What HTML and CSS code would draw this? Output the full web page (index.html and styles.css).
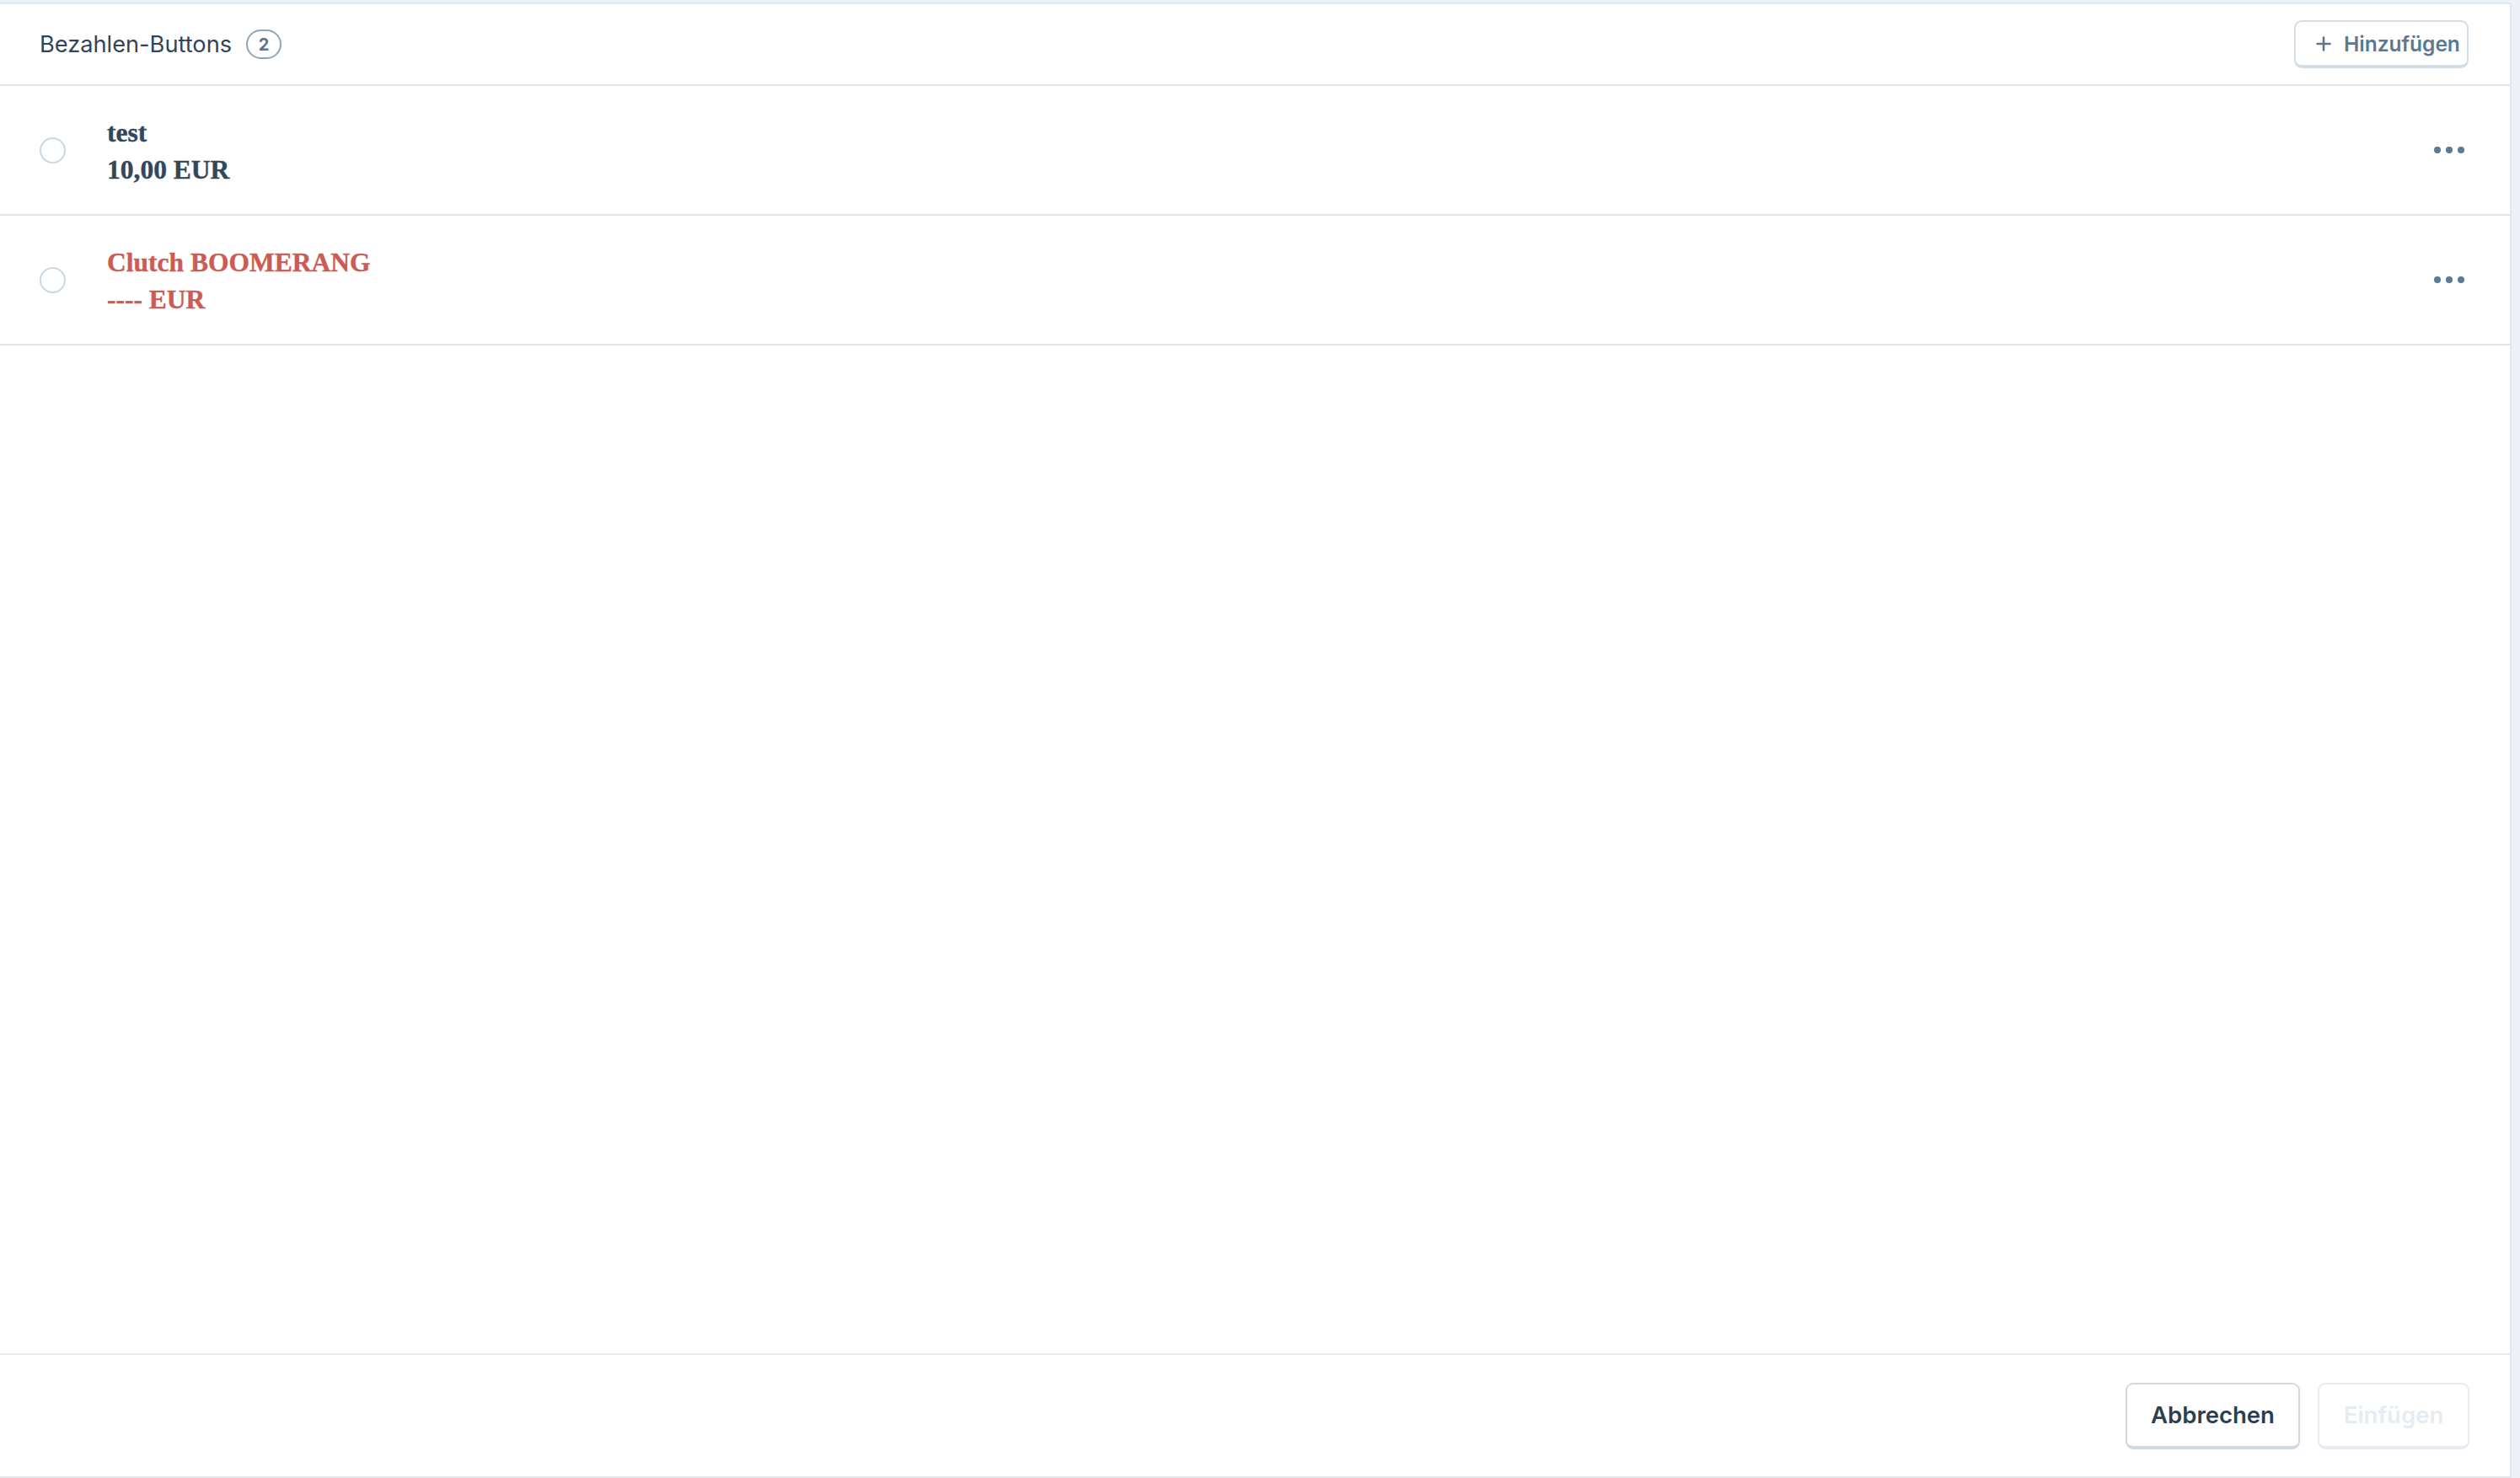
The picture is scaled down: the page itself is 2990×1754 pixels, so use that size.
FILE: index.html
```html
<!DOCTYPE html>
<html lang="de">
<head>
<meta charset="utf-8">
<title>Bezahlen-Buttons</title>
<link rel="stylesheet" href="styles.css">
</head>
<body>
<div class="panel">
  <header class="head">
    <div class="head-title">
      <span class="title">Bezahlen-Buttons</span>
      <span class="badge">2</span>
    </div>
    <button class="btn-add" type="button">
      <svg class="plus" width="18" height="18" viewBox="0 0 18 18"><path d="M9 1.5v15M1.5 9h15" stroke="currentColor" stroke-width="2.6" stroke-linecap="round" fill="none"/></svg>
      <span>Hinzufügen</span>
    </button>
  </header>
  <div class="list">
    <div class="row">
      <span class="radio"></span>
      <div class="info">
        <div class="name">test</div>
        <div class="price">10,00 EUR</div>
      </div>
      <span class="dots"><i></i><i></i><i></i></span>
    </div>
    <div class="row row-error">
      <span class="radio"></span>
      <div class="info">
        <div class="name">Clutch BOOMERANG</div>
        <div class="price">---- EUR</div>
      </div>
      <span class="dots"><i></i><i></i><i></i></span>
    </div>
  </div>
  <div class="spacer"></div>
  <footer class="foot">
    <button class="btn btn-cancel" type="button">Abbrechen</button>
    <button class="btn btn-insert" type="button" disabled>Einfügen</button>
  </footer>
</div>
</body>
</html>
```
FILE: styles.css
```css
html, body {
  margin: 0;
  padding: 0;
  height: 100%;
}
body {
  background: #edf1f5;
  font-family: Inter, "Noto Sans", "Liberation Sans", sans-serif;
  color: #33475b;
}
.panel {
  box-sizing: border-box;
  width: 2980px;
  height: 1751px;
  margin-top: 3px;
  background: #fff;
  border-top: 2px solid #dfe6ed;
  border-right: 2px solid #dfe6ed;
  border-bottom: 2px solid #dfe6ed;
  display: flex;
  flex-direction: column;
}
.head {
  height: 95px;
  border-bottom: 2px solid #dfe6ed;
  display: flex;
  align-items: center;
  justify-content: space-between;
  padding: 0 49px 0 47px;
  flex-shrink: 0;
}
.head-title {
  display: flex;
  align-items: center;
  gap: 17px;
}
.title {
  font-size: 27.2px;
  color: #30445a;
}
.badge {
  box-sizing: border-box;
  width: 42px;
  height: 35px;
  border: 2px solid #8ea4b8;
  border-radius: 18px;
  display: flex;
  align-items: center;
  justify-content: center;
  font-size: 20px;
  font-weight: 700;
  color: #5a7590;
}
.btn-add {
  box-sizing: border-box;
  height: 57px;
  width: 207px;
  display: flex;
  align-items: center;
  gap: 15px;
  padding: 0 10px 0 24px;
  background: #fff;
  border: 2px solid #d3dde6;
  border-bottom-width: 4px;
  border-radius: 9px;
  font-family: Inter, "Noto Sans", sans-serif;
  font-size: 24.5px;
  font-weight: 600;
  color: #5b7891;
  white-space: nowrap;
}
.plus {
  flex-shrink: 0;
}
.list {
  display: flex;
  flex-direction: column;
  flex-shrink: 0;
}
.row {
  height: 152px;
  border-bottom: 2px solid #dce4ec;
  display: flex;
  align-items: center;
  padding: 0 54px 0 47px;
}
.radio {
  box-sizing: border-box;
  width: 31px;
  height: 31px;
  border: 2px solid #cbd7e2;
  border-radius: 50%;
  flex-shrink: 0;
}
.info {
  flex: 1;
  margin-left: 49px;
  padding-top: 3px;
  font-family: "Liberation Serif", "Times New Roman", serif;
  font-weight: 700;
  font-size: 31.5px;
  line-height: 44px;
  color: #33475b;
  -webkit-text-stroke: 0.4px currentColor;
}
.row-error .info {
  color: #cc5b53;
}
.dots {
  display: flex;
  gap: 6px;
}
.dots i {
  width: 8px;
  height: 8px;
  border-radius: 50%;
  background: #5b7a94;
}
.spacer {
  flex: 1;
}
.foot {
  height: 144px;
  flex-shrink: 0;
  border-top: 2px solid #e6ebf0;
  display: flex;
  align-items: center;
  justify-content: flex-end;
  gap: 21px;
  padding: 0 48px 0 0;
}
.btn {
  box-sizing: border-box;
  height: 79px;
  border-radius: 9px;
  background: #fff;
  font-family: Inter, "Noto Sans", sans-serif;
  font-size: 27.5px;
  font-weight: 600;
  padding: 0;
}
.btn-cancel {
  width: 207px;
  border: 2px solid #cfd9e3;
  border-bottom-width: 4px;
  color: #2c3e50;
}
.btn-insert {
  width: 180px;
  border: 2px solid #e6ecf1;
  border-bottom-width: 4px;
  color: #e5ecf2;
}
```
